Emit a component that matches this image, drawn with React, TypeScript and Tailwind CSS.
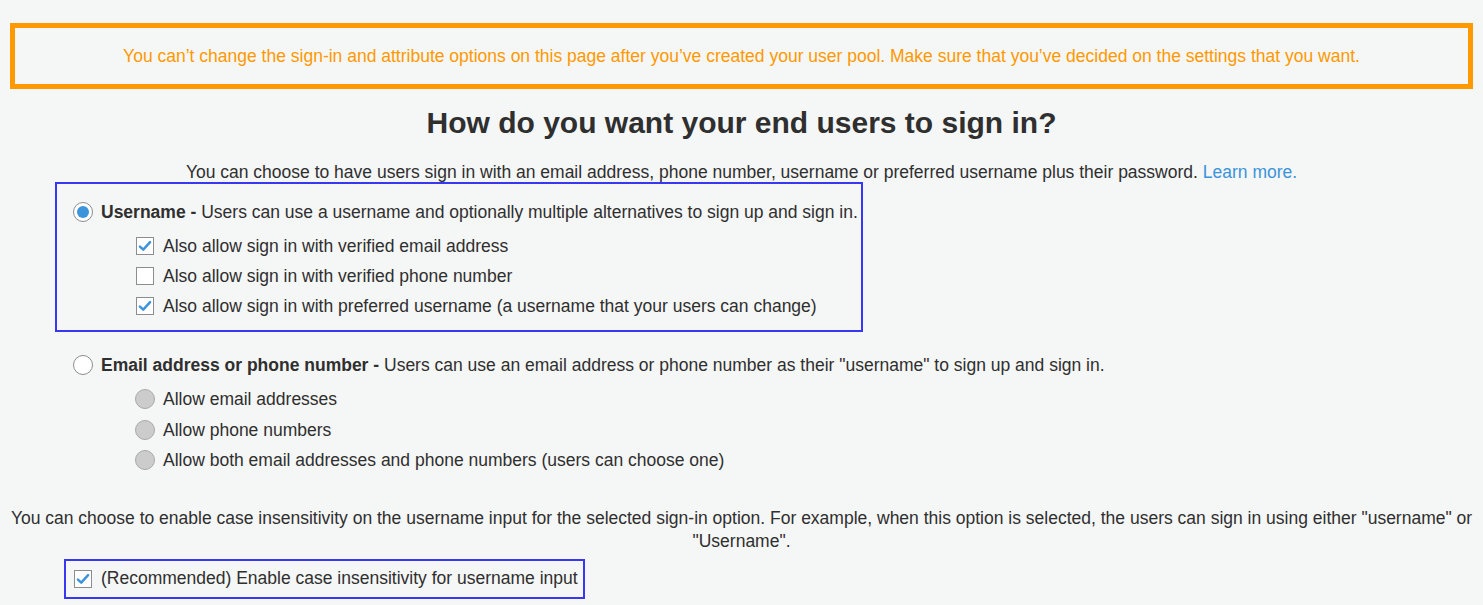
import React, { useState } from "react"

type CheckProps = {
  checked: boolean
  onToggle?: () => void
}

function Checkbox({ checked, onToggle }: CheckProps) {
  return (
    <span
      onClick={onToggle}
      className="flex h-[18px] w-[18px] shrink-0 cursor-pointer items-center justify-center border border-[#8d8d8d] bg-white"
    >
      {checked && (
        <svg viewBox="0 0 16 16" className="h-[14px] w-[14px]">
          <path d="M2.2 8.6 L6 12.2 L13.8 3.6" fill="none" stroke="#3d94db" strokeWidth="2.8" strokeLinecap="round" strokeLinejoin="round" />
        </svg>
      )}
    </span>
  )
}

function Radio({ checked, disabled }: { checked: boolean; disabled?: boolean }) {
  if (disabled) {
    return <span className="h-5 w-5 shrink-0 rounded-full border border-[#a9a9a9] bg-[#cccccc]" />
  }
  return (
    <span className="flex h-5 w-5 shrink-0 items-center justify-center rounded-full border border-[#8d8d8d] bg-white">
      {checked && <span className="h-3 w-3 rounded-full bg-[#3d94db]" />}
    </span>
  )
}

export default function App() {
  const [alsoAllow, setAlsoAllow] = useState([true, false, true])
  const [caseInsensitive, setCaseInsensitive] = useState(true)

  const usernameOptions = [
    "Also allow sign in with verified email address",
    "Also allow sign in with verified phone number",
    "Also allow sign in with preferred username (a username that your users can change)",
  ]

  const emailOptions = [
    "Allow email addresses",
    "Allow phone numbers",
    "Allow both email addresses and phone numbers (users can choose one)",
  ]

  const toggle = (i: number) => {
    setAlsoAllow((prev) => prev.map((v, idx) => (idx === i ? !v : v)))
  }

  return (
    <div className="min-h-[605px] bg-[#f5f6f6] px-[10px] pt-[23px] text-[17.5px] text-[#2f2f2f] font-['Liberation_Sans',Arial,sans-serif]">
      {/* warning banner */}
      <div className="flex h-[66px] items-center justify-center border-[5px] border-[#ff9900] text-[#ff9900]">
        You can’t change the sign-in and attribute options on this page after you’ve created your user pool. Make sure that you’ve decided on the settings that you want.
      </div>

      <h2 className="mt-[18px] text-center text-[30px] font-bold leading-[32px]">How do you want your end users to sign in?</h2>

      <p className="mt-[23px] text-center leading-[20px]">
        You can choose to have users sign in with an email address, phone number, username or preferred username plus their password.{" "}
        <a className="text-[#3b94d9]">Learn more.</a>
      </p>

      {/* username option */}
      <div className="ml-[45px] w-[808px] border-2 border-[#3838f2] pl-4 pt-[18px] pb-[9px]">
        <div className="flex h-5 items-center gap-2">
          <Radio checked />
          <span>
            <b>Username -</b> Users can use a username and optionally multiple alternatives to sign up and sign in.
          </span>
        </div>
        <div className="mt-[9px] pl-[63px]">
          {usernameOptions.map((label, i) => (
            <div key={label} className="flex h-[30px] items-center gap-[9px]">
              <Checkbox checked={alsoAllow[i]} onToggle={() => toggle(i)} />
              <span>{label}</span>
            </div>
          ))}
        </div>
      </div>

      {/* email option */}
      <div className="ml-[63px] mt-[23px]">
        <div className="flex h-5 items-center gap-2">
          <Radio checked={false} />
          <span>
            <b>Email address or phone number -</b> Users can use an email address or phone number as their "username" to sign up and sign in.
          </span>
        </div>
        <div className="mt-[9px] pl-[62px]">
          {emailOptions.map((label) => (
            <div key={label} className="flex h-[30.5px] items-center gap-2">
              <Radio checked={false} disabled />
              <span>{label}</span>
            </div>
          ))}
        </div>
      </div>

      <p className="mt-[31px] text-center leading-[23px]">
        You can choose to enable case insensitivity on the username input for the selected sign-in option. For example, when this option is selected, the users can sign in using either "username" or "Username".
      </p>

      <div className="ml-[54px] mt-[6px] flex h-[40px] w-[521px] items-center gap-[9px] border-2 border-[#3838f2] pl-2">
        <Checkbox checked={caseInsensitive} onToggle={() => setCaseInsensitive(!caseInsensitive)} />
        <span>(Recommended) Enable case insensitivity for username input</span>
      </div>
    </div>
  )
}
